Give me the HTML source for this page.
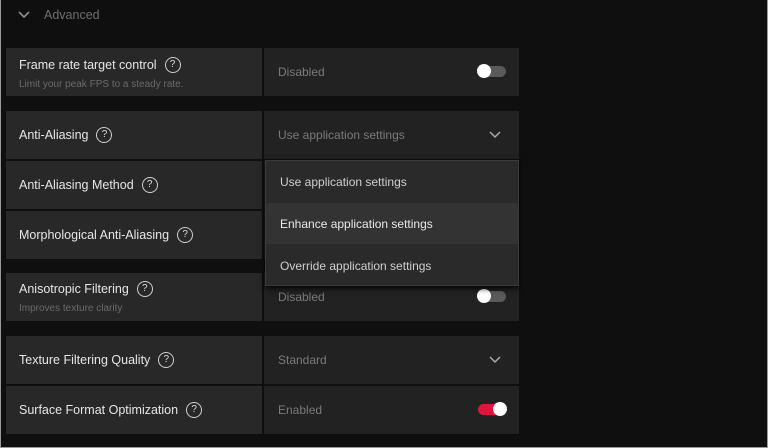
<!DOCTYPE html>
<html><head><style>
*{margin:0;padding:0;box-sizing:border-box}
body{width:768px;height:448px;background:#0f0f0f;font-family:"Liberation Sans",sans-serif;position:relative;overflow:hidden}
.frame{position:absolute;left:0;top:0;width:768px;height:448px;border:1px solid #9a9a9a;border-top:none;pointer-events:none}
.hdr{position:absolute;left:18px;top:8px;color:#6e6e6e;font-size:12.5px}
.hdr svg{position:absolute;left:0;top:3px}
.hdr span{position:absolute;left:26px;top:0;white-space:nowrap}
.l,.r{position:absolute;height:48px}
.l{left:6px;width:256px;background:#282828}
.r{left:264px;width:255px;background:#222}
.t{position:absolute;left:13px;color:#e6e6e6;font-size:12.5px;white-space:nowrap;line-height:16px}
.s{position:absolute;left:13px;color:#6a6a6a;font-size:10px;white-space:nowrap}
.q{display:inline-block;width:16px;height:16px;border:1.4px solid #cfcfcf;border-radius:50%;font-size:10px;text-align:center;line-height:13px;margin-left:8px;vertical-align:top;color:#ddd}
.v{position:absolute;left:14px;top:17px;color:#7a7a7a;font-size:12px}
.tg{position:absolute;right:13px;top:18px;width:28px;height:11px;border-radius:6px;background:#5a5a5a}
.tg i{position:absolute;left:-1px;top:-2px;width:14px;height:14px;border-radius:50%;background:#fff}
.tg.on{background:#e0143c}.tg.on i{left:auto;right:-1px}
.ch{position:absolute;right:18px;top:20px}
.dd{position:absolute;left:265px;top:160px;width:254px;height:126px;background:#2a2a2a;border:1px solid #3a3a3a;box-shadow:0 2px 6px #000}
.it{position:absolute;left:0;width:252px;height:41px;color:#cfcfcf;font-size:12px;padding:14px 0 0 14px}
</style></head><body>
<div class="hdr"><svg width="12" height="8" viewBox="0 0 12 8"><path d="M1 1l5 5 5-5" stroke="#888" stroke-width="1.8" fill="none"/></svg><span>Advanced</span></div>

<div class="l" style="top:48px"><div class="t" style="top:9px">Frame rate target control<span class="q">?</span></div><div class="s" style="top:31px">Limit your peak FPS to a steady rate.</div></div>
<div class="r" style="top:48px"><div class="v">Disabled</div><div class="tg"><i></i></div></div>

<div class="l" style="top:111px"><div class="t" style="top:16px">Anti-Aliasing<span class="q">?</span></div></div>
<div class="r" style="top:111px"><div class="v">Use application settings</div><svg class="ch" width="12" height="8" viewBox="0 0 12 8"><path d="M1 1l5 5 5-5" stroke="#aaa" stroke-width="1.5" fill="none"/></svg></div>

<div class="l" style="top:161px"><div class="t" style="top:16px">Anti-Aliasing Method<span class="q">?</span></div></div>
<div class="r" style="top:161px"></div>
<div class="l" style="top:211px"><div class="t" style="top:16px">Morphological Anti-Aliasing<span class="q">?</span></div></div>
<div class="r" style="top:211px"></div>

<div class="l" style="top:273px"><div class="t" style="top:8px">Anisotropic Filtering<span class="q">?</span></div><div class="s" style="top:30px">Improves texture clarity</div></div>
<div class="r" style="top:273px"><div class="v">Disabled</div><div class="tg"><i></i></div></div>

<div class="l" style="top:336px"><div class="t" style="top:16px">Texture Filtering Quality<span class="q">?</span></div></div>
<div class="r" style="top:336px"><div class="v">Standard</div><svg class="ch" width="12" height="8" viewBox="0 0 12 8"><path d="M1 1l5 5 5-5" stroke="#aaa" stroke-width="1.5" fill="none"/></svg></div>

<div class="l" style="top:386px"><div class="t" style="top:16px">Surface Format Optimization<span class="q">?</span></div></div>
<div class="r" style="top:386px"><div class="v">Enabled</div><div class="tg on"><i></i></div></div>

<div class="dd">
<div class="it" style="top:0">Use application settings</div>
<div class="it" style="top:42px;background:#333;color:#e8e8e8">Enhance application settings</div>
<div class="it" style="top:84px">Override application settings</div>
</div>
<div class="frame"></div>
</body></html>
